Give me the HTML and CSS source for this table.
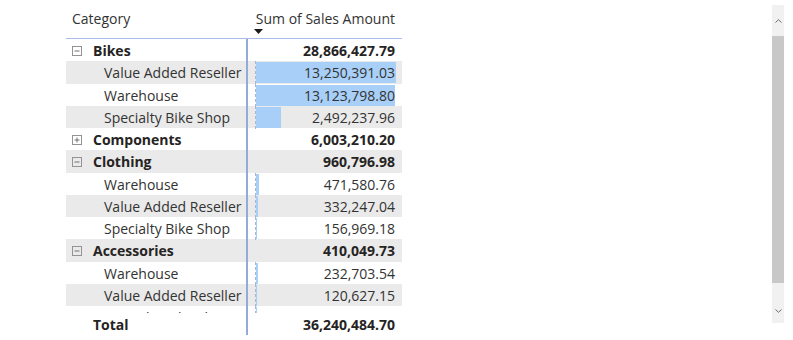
FILE: index.html
```html
<!DOCTYPE html>
<html>
<head>
<meta charset="utf-8">
<link rel="stylesheet" href="styles.css">
</head>
<body>
<div class="page">
  <div class="matrix">
    <div class="head">
      <div class="head-cat">Category</div>
      <div class="head-val">
        <div class="head-val-text">Sum of Sales Amount</div>
        <svg class="sort" width="9" height="5" viewBox="0 0 9 5"><polygon points="0,0 9,0 4.5,5" fill="#1a1a1a"/></svg>
      </div>
    </div>
    <div class="body">
      <div class="row parent">
        <div class="cat"><svg class="tog" width="10" height="10" viewBox="0 0 10 10"><rect x="0.5" y="0.5" width="9" height="9" fill="none" stroke="#939393"/><line x1="2.5" y1="5" x2="7.5" y2="5" stroke="#707070"/></svg><span>Bikes</span></div>
        <div class="val"><span class="num">28,866,427.79</span></div>
      </div>
      <div class="row child alt">
        <div class="cat"><span>Value Added Reseller</span></div>
        <div class="val"><div class="axis"><div class="bar" style="width:140px"></div><span class="num">13,250,391.03</span></div></div>
      </div>
      <div class="row child">
        <div class="cat"><span>Warehouse</span></div>
        <div class="val"><div class="axis"><div class="bar" style="width:138.5px"></div><span class="num">13,123,798.80</span></div></div>
      </div>
      <div class="row child alt">
        <div class="cat"><span>Specialty Bike Shop</span></div>
        <div class="val"><div class="axis"><div class="bar" style="width:25px"></div><span class="num">2,492,237.96</span></div></div>
      </div>
      <div class="row parent">
        <div class="cat"><svg class="tog" width="10" height="10" viewBox="0 0 10 10"><rect x="0.5" y="0.5" width="9" height="9" fill="none" stroke="#939393"/><line x1="2.5" y1="5" x2="7.5" y2="5" stroke="#707070"/><line x1="5" y1="2.5" x2="5" y2="7.5" stroke="#707070"/></svg><span>Components</span></div>
        <div class="val"><span class="num">6,003,210.20</span></div>
      </div>
      <div class="row parent alt">
        <div class="cat"><svg class="tog" width="10" height="10" viewBox="0 0 10 10"><rect x="0.5" y="0.5" width="9" height="9" fill="none" stroke="#939393"/><line x1="2.5" y1="5" x2="7.5" y2="5" stroke="#707070"/></svg><span>Clothing</span></div>
        <div class="val"><span class="num">960,796.98</span></div>
      </div>
      <div class="row child">
        <div class="cat"><span>Warehouse</span></div>
        <div class="val"><div class="axis"><div class="bar" style="width:3px"></div><span class="num">471,580.76</span></div></div>
      </div>
      <div class="row child alt">
        <div class="cat"><span>Value Added Reseller</span></div>
        <div class="val"><div class="axis"><div class="bar" style="width:2px"></div><span class="num">332,247.04</span></div></div>
      </div>
      <div class="row child">
        <div class="cat"><span>Specialty Bike Shop</span></div>
        <div class="val"><div class="axis"><div class="bar" style="width:1px"></div><span class="num">156,969.18</span></div></div>
      </div>
      <div class="row parent alt">
        <div class="cat"><svg class="tog" width="10" height="10" viewBox="0 0 10 10"><rect x="0.5" y="0.5" width="9" height="9" fill="none" stroke="#939393"/><line x1="2.5" y1="5" x2="7.5" y2="5" stroke="#707070"/></svg><span>Accessories</span></div>
        <div class="val"><span class="num">410,049.73</span></div>
      </div>
      <div class="row child">
        <div class="cat"><span>Warehouse</span></div>
        <div class="val"><div class="axis"><div class="bar" style="width:2px"></div><span class="num">232,703.54</span></div></div>
      </div>
      <div class="row child alt">
        <div class="cat"><span>Value Added Reseller</span></div>
        <div class="val"><div class="axis"><div class="bar" style="width:1px"></div><span class="num">120,627.15</span></div></div>
      </div>
      <div class="row child">
        <div class="cat"><span>Specialty Bike Shop</span></div>
        <div class="val"><div class="axis"><div class="bar" style="width:0.5px"></div><span class="num">56,719.04</span></div></div>
      </div>
    </div>
    <div class="row total">
      <div class="cat"><span>Total</span></div>
      <div class="val"><span class="num">36,240,484.70</span></div>
    </div>
  </div>
  <div class="scrollbar">
    <div class="sb-btn sb-up"><svg width="7" height="4" viewBox="0 0 7 4"><polyline points="0.5,3.5 3.5,0.7 6.5,3.5" fill="none" stroke="#6f6f6f" stroke-width="1"/></svg></div>
    <div class="sb-thumb"></div>
    <div class="sb-rest"><svg width="7" height="4" viewBox="0 0 7 4"><polyline points="0.5,0.5 3.5,3.3 6.5,0.5" fill="none" stroke="#6f6f6f" stroke-width="1"/></svg></div>
  </div>
</div>
</body>
</html>
```
FILE: styles.css
```css
html, body {
  margin: 0;
  padding: 0;
  background: #ffffff;
}
body {
  width: 793px;
  height: 340px;
  overflow: hidden;
  font-family: "Segoe UI", "Open Sans", "Noto Sans", sans-serif;
  font-size: 14px;
  color: #252423;
}
.page {
  display: flex;
  align-items: flex-start;
}
.matrix {
  margin-left: 66px;
  width: 336px;
}
.head {
  display: grid;
  grid-template-columns: 180px 156px;
  height: 38px;
  border-bottom: 1px solid #a9bde6;
}
.head-cat {
  padding-left: 6px;
  padding-top: 9px;
  line-height: 20px;
  color: #333333;
  font-size: 14px;
}
.head-val {
  display: flex;
  flex-direction: column;
  padding-top: 9px;
  font-size: 14px;
  color: #333333;
}
.head-val-text {
  text-align: right;
  line-height: 20px;
  padding-right: 7px;
}
.sort {
  margin-left: 8px;
  margin-top: 0px;
}
.body {
  height: 274px;
  overflow: hidden;
}
.row {
  display: grid;
  grid-template-columns: 180px 156px;
  height: 22.25px;
  line-height: 22px;
}
.row.alt {
  background: #eaeaea;
}
.cat {
  display: flex;
  align-items: center;
  white-space: nowrap;
  overflow: hidden;
  padding-top: 1px;
  box-sizing: border-box;
}
.parent .cat, .total .cat {
  padding-left: 6px;
  font-weight: 700;
}
.tog {
  margin-right: 11px;
  margin-top: -1px;
  flex: none;
}
.total .cat {
  padding-left: 27px;
}
.child .cat {
  padding-left: 38px;
  color: #333333;
}
.val {
  border-left: 2px solid #94aad8;
  display: flex;
  justify-content: flex-end;
  align-items: center;
  padding-right: 7px;
  padding-top: 1px;
  box-sizing: border-box;
  white-space: nowrap;
}
.parent .val, .total .val {
  font-weight: 700;
}
.child .val {
  padding-right: 6px;
  padding-left: 7px;
  padding-top: 0;
  justify-content: stretch;
  align-items: stretch;
}
.axis {
  flex: 1;
  display: grid;
  border-left: 1px dashed #a8b6cf;
  padding: 1px 0;
}
.bar {
  grid-area: 1 / 1;
  background: #a8cff8;
  height: 100%;
}
.axis .num {
  grid-area: 1 / 1;
  text-align: right;
  padding-right: 1px;
  padding-top: 1px;
  line-height: 20px;
  color: #333333;
}
.total {
  height: 21px;
  line-height: 20px;
  background: #ffffff;
}
.total .cat, .total .val {
  padding-top: 2px;
}
.scrollbar {
  margin-left: auto;
  margin-right: 9px;
  margin-top: 5px;
  width: 12px;
  height: 318px;
  background: #f1f1f1;
  display: flex;
  flex-direction: column;
}
.sb-btn {
  height: 31px;
  display: flex;
  justify-content: center;
  padding-top: 14px;
  box-sizing: border-box;
}
.sb-thumb {
  height: 247px;
  background: #c8c8c8;
}
.sb-rest {
  flex: 1;
  display: flex;
  justify-content: center;
  padding-top: 26px;
  box-sizing: border-box;
}
```
